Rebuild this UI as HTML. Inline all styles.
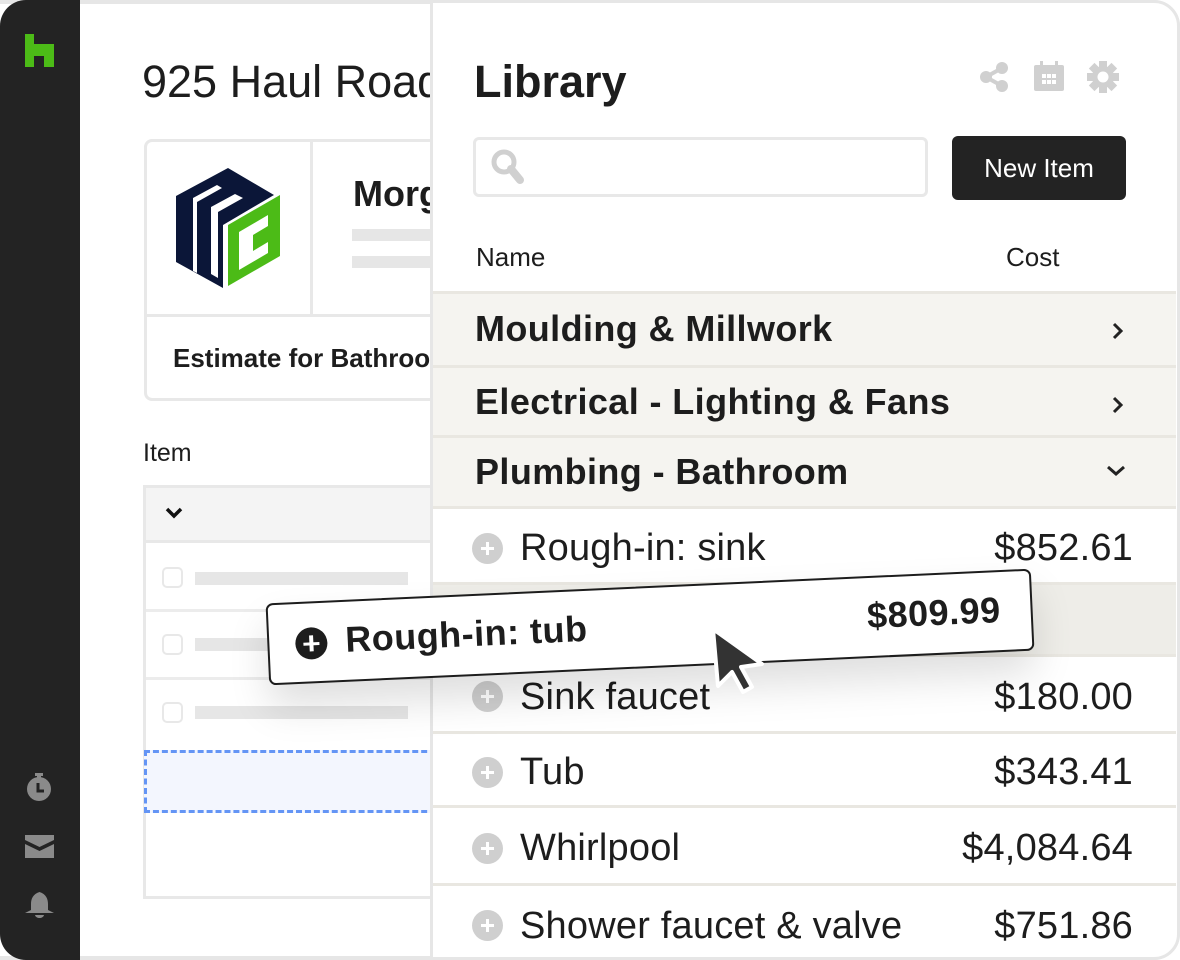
<!DOCTYPE html>
<html><head><meta charset="utf-8"><style>
*{box-sizing:border-box;margin:0;padding:0}
body{width:1180px;height:960px;background:#fff;font-family:"Liberation Sans",sans-serif;color:#1d1d1d;position:relative;overflow:hidden}
.abs{position:absolute}
.frame{left:0;top:0;width:1180px;height:960px;border:4px solid #e6e6e6;border-left:none;border-radius:0 26px 26px 0}
.side{left:0;top:0;width:80px;height:960px;background:#232323;border-radius:26px 0 0 26px}
.bar{background:#e6e6e6;height:13px}
.cb{width:21px;height:21px;border:2px solid #e8e8e8;border-radius:5px}
.row{left:433px;width:743px;border-bottom:3px solid #e9e7e1}
.cat{background:#f5f4f0;font-size:36px;font-weight:bold;padding-left:42px;letter-spacing:0.4px}
.it{font-size:38px;padding-left:87px;padding-top:6px;display:flex;align-items:center;letter-spacing:0.2px}
.it .p{position:absolute;right:43px}
.plus{position:absolute;left:39px;top:50%;margin-top:-13px;width:31px;height:31px;border-radius:50%;background:#cfcfcf}
.plus:before,.plus:after{content:"";position:absolute;background:#fff;left:9px;top:14px;width:13px;height:3px}
.plus:after{left:14px;top:9px;width:3px;height:13px}
</style></head><body>
<div class="abs frame"></div>
<div class="abs side"></div>
<svg class="abs" style="left:25px;top:34px" width="30" height="33" viewBox="0 0 30 33"><path d="M0 0H9V10H29V33H19V22H9V33H0Z" fill="#4cbb17"/></svg>
<svg class="abs" style="left:24px;top:772px" width="30" height="30" viewBox="0 0 30 30"><circle cx="15" cy="17" r="12" fill="#8a8a8a"/><rect x="11" y="1" width="8" height="3" fill="#8a8a8a"/><rect x="13" y="3" width="4" height="3" fill="#8a8a8a"/><path d="M14 11V19H20" stroke="#232323" stroke-width="3" fill="none"/></svg>
<svg class="abs" style="left:25px;top:835px" width="29" height="23" viewBox="0 0 29 23"><path d="M0 0H29V5L14.5 12L0 5Z" fill="#8a8a8a"/><path d="M0 9L14.5 16L29 9V23H0Z" fill="#8a8a8a"/></svg>
<svg class="abs" style="left:25px;top:891px" width="29" height="28" viewBox="0 0 29 28"><path d="M14.5 1C8 3 6 8 6 13V19L0 22H29L23 19V13C23 8 21 3 14.5 1Z" fill="#8a8a8a"/><path d="M10 24H19C18 28 11 28 10 24Z" fill="#8a8a8a"/></svg>

<div class="abs" style="left:142px;top:56px;font-size:45px;white-space:nowrap">925 Haul Road</div>
<div class="abs" style="left:144px;top:139px;width:320px;height:262px;border:3px solid #e8e8e8;border-radius:8px"></div>
<div class="abs" style="left:310px;top:141px;width:3px;height:174px;background:#e8e8e8"></div>
<div class="abs" style="left:146px;top:314px;width:300px;height:3px;background:#e8e8e8"></div>
<svg class="abs" style="left:176px;top:168px" width="105" height="121" viewBox="0 0 105 121"><path d="M0 28L52 0L98 27L47 57V120L0 94Z" fill="#0b1638"/><path d="M17 30L41 17L46 20L21 34V105L17 103Z" fill="#fff"/><path d="M35 39L59 26L67 30L42 44V110L35 106Z" fill="#fff"/><path d="M52 57L104 27V88L52 118Z" fill="#4cbb17"/><path d="M63 64L92 47V58L77 67V83L92 74V85L63 102Z" fill="#fff"/></svg>
<div class="abs" style="left:353px;top:173px;font-size:36px;font-weight:bold;white-space:nowrap">Morgan</div>
<div class="abs bar" style="left:352px;top:229px;width:90px;height:12px"></div>
<div class="abs bar" style="left:352px;top:256px;width:90px;height:12px"></div>
<div class="abs" style="left:173px;top:343px;font-size:26px;font-weight:bold;white-space:nowrap">Estimate for Bathroom</div>
<div class="abs" style="left:143px;top:439px;font-size:25px">Item</div>
<div class="abs" style="left:143px;top:485px;width:320px;height:414px;border:3px solid #e8e8e8"></div>
<div class="abs" style="left:146px;top:488px;width:300px;height:55px;background:#f4f4f4;border-bottom:3px solid #e8e8e8"></div>
<svg class="abs" style="left:164px;top:506px" width="20" height="14" viewBox="0 0 20 14"><path d="M3 3L10 10L17 3" stroke="#111" stroke-width="3.5" fill="none"/></svg>
<div class="abs" style="left:146px;top:609px;width:300px;height:3px;background:#ececec"></div>
<div class="abs" style="left:146px;top:677px;width:300px;height:3px;background:#ececec"></div>
<div class="abs cb" style="left:162px;top:567px"></div><div class="abs bar" style="left:195px;top:572px;width:213px"></div>
<div class="abs cb" style="left:162px;top:634px"></div><div class="abs bar" style="left:195px;top:638px;width:213px"></div>
<div class="abs cb" style="left:162px;top:702px"></div><div class="abs bar" style="left:195px;top:706px;width:213px"></div>
<div class="abs" style="left:144px;top:750px;width:310px;height:63px;background:#f3f6fe;border:3px dashed #6495f5"></div>

<div class="abs" style="left:430px;top:0;width:750px;height:960px;background:#fff;border:3px solid #e6e6e6;border-radius:0 26px 26px 0"></div>
<div class="abs" style="left:474px;top:56px;font-size:45px;font-weight:bold">Library</div>
<svg class="abs" style="left:978px;top:61px" width="32" height="32" viewBox="0 0 32 32"><circle cx="24" cy="7" r="6" fill="#d0d0d0"/><circle cx="24" cy="25" r="6" fill="#d0d0d0"/><circle cx="8" cy="16" r="6" fill="#d0d0d0"/><path d="M8 16L24 7M8 16L24 25" stroke="#d0d0d0" stroke-width="4"/></svg>
<svg class="abs" style="left:1034px;top:61px" width="30" height="30" viewBox="0 0 30 30"><rect x="6" y="0" width="3" height="6" fill="#d0d0d0"/><rect x="21" y="0" width="3" height="6" fill="#d0d0d0"/><rect x="0" y="4" width="30" height="26" rx="2" fill="#d0d0d0"/><g fill="#fff"><rect x="8" y="13" width="4" height="4"/><rect x="13" y="13" width="4" height="4"/><rect x="18" y="13" width="4" height="4"/><rect x="8" y="19" width="4" height="4"/><rect x="13" y="19" width="4" height="4"/><rect x="18" y="19" width="4" height="4"/></g></svg>
<svg class="abs" style="left:1087px;top:61px" width="32" height="32" viewBox="0 0 32 32"><g fill="#d0d0d0"><circle cx="16" cy="16" r="11"/><rect x="12" y="0" width="8" height="32"/><rect x="12" y="0" width="8" height="32" transform="rotate(45 16 16)"/><rect x="12" y="0" width="8" height="32" transform="rotate(90 16 16)"/><rect x="12" y="0" width="8" height="32" transform="rotate(135 16 16)"/></g><circle cx="16" cy="16" r="5.5" fill="#fff"/></svg>
<div class="abs" style="left:473px;top:137px;width:455px;height:60px;border:3px solid #e8e8e8;border-radius:6px"></div>
<svg class="abs" style="left:490px;top:148px" width="38" height="40" viewBox="0 0 38 40"><circle cx="14" cy="14" r="10" stroke="#d0d0d0" stroke-width="5" fill="none"/><path d="M21 21L30 32" stroke="#d0d0d0" stroke-width="8" stroke-linecap="round"/></svg>
<div class="abs" style="left:952px;top:136px;width:174px;height:64px;background:#232323;border-radius:6px;color:#fff;font-size:26px;display:flex;align-items:center;justify-content:center">New Item</div>
<div class="abs" style="left:476px;top:242px;font-size:26px">Name</div>
<div class="abs" style="left:1006px;top:242px;font-size:26px">Cost</div>

<div class="abs" style="left:433px;top:291px;width:743px;height:3px;background:#e9e7e1"></div>
<div class="abs row cat" style="top:294px;height:74px;line-height:70px">Moulding &amp; Millwork</div>
<div class="abs row cat" style="top:368px;height:70px;line-height:68px">Electrical - Lighting &amp; Fans</div>
<div class="abs row cat" style="top:438px;height:71px;line-height:68px">Plumbing - Bathroom</div>
<svg class="abs" style="left:1110px;top:320px" width="16" height="22" viewBox="0 0 16 22"><path d="M4 4L11 11L4 18" stroke="#222" stroke-width="3" fill="none"/></svg>
<svg class="abs" style="left:1110px;top:394px" width="16" height="22" viewBox="0 0 16 22"><path d="M4 4L11 11L4 18" stroke="#222" stroke-width="3" fill="none"/></svg>
<svg class="abs" style="left:1104px;top:463px" width="24" height="16" viewBox="0 0 24 16"><path d="M4 4L12 11L20 4" stroke="#222" stroke-width="3" fill="none"/></svg>

<div class="abs row it" style="top:509px;height:76px"><span class="plus"></span>Rough-in: sink<span class="p">$852.61</span></div>
<div class="abs row" style="top:585px;height:72px;background:#eeede8"></div>
<div class="abs row it" style="top:657px;height:77px"><span class="plus"></span>Sink faucet<span class="p">$180.00</span></div>
<div class="abs row it" style="top:734px;height:74px"><span class="plus"></span>Tub<span class="p">$343.41</span></div>
<div class="abs row it" style="top:808px;height:78px"><span class="plus"></span>Whirlpool<span class="p">$4,084.64</span></div>
<div class="abs row it" style="top:886px;height:74px;border-bottom:none"><span class="plus"></span>Shower faucet &amp; valve<span class="p">$751.86</span></div>

<div class="abs" style="left:267px;top:586px;width:766px;height:82px;background:#fff;border:2.5px solid #1d1d1d;border-radius:7px;transform:rotate(-2.6deg);box-shadow:0 22px 40px rgba(0,0,0,0.13)">
<div class="abs" style="left:26px;top:24px;width:32px;height:32px;border-radius:50%;background:#1d1d1d"></div>
<div class="abs" style="left:34px;top:38.5px;width:16px;height:3.5px;background:#fff"></div>
<div class="abs" style="left:40.2px;top:32px;width:3.5px;height:16px;background:#fff"></div>
<div class="abs" style="left:76px;top:17px;font-size:36px;font-weight:bold;letter-spacing:0.5px">Rough-in: tub</div>
<div class="abs" style="right:30px;top:17px;font-size:36px;font-weight:bold;letter-spacing:0.5px">$809.99</div>
</div>
<svg class="abs" style="left:708px;top:624px" width="62" height="72" viewBox="0 0 62 72"><path d="M5 5L54 40L33 43L44 63L35 68L24 48L10 62Z" fill="#333" stroke="#fff" stroke-width="4" stroke-linejoin="round"/></svg>
</body></html>
